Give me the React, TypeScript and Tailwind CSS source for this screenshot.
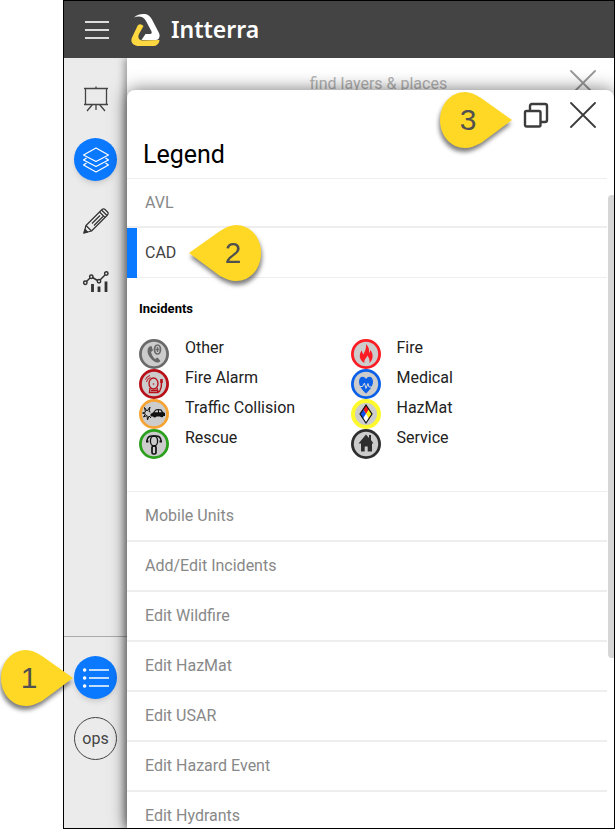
import React from 'react';

type CalloutProps = {
  label: string;
  className: string;
  flip?: boolean;
};

const Callout: React.FC<CalloutProps> = ({ label, className, flip }) => (
  <div className={`absolute z-20 h-14 w-[72px] pointer-events-none ${className}`}>
    <svg
      viewBox="0 0 72 56"
      className={`absolute inset-0 h-full w-full overflow-visible drop-shadow-[-1px_4px_2px_rgba(0,0,0,0.5)] ${flip ? 'rotate-y-180' : ''}`}
    >
      <path d="M72 28 L41 6 C35 2 30 0 25 0 C11 0 0 12 0 28 C0 44 11 56 25 56 C30 56 35 54 41 51 Z" fill="#fed824" />
    </svg>
    <span
      className={`absolute inset-y-0 flex w-14 items-center justify-center font-['Liberation_Sans',sans-serif] text-3xl text-[#505050] ${flip ? 'right-0' : 'left-0'}`}
    >
      {label}
    </span>
  </div>
);

const Logo = () => (
  <svg viewBox="0 0 30 32" className="h-8 w-[30px]">
    <path d="M3 3.500 C6 0.500 9 0 12 0 C17 0 19 2 21 5.500 L28 19 C29.500 22.500 28 26 25 26 H10.500 L14.500 20 H19 C21 20 21 18.500 20.300 17 L15 7 C12.500 2.500 8 1.500 3 3.500 Z" fill="#fff" />
    <path d="M8 10.500 Q10 9.500 12.500 12 L8 20 C6.500 23.500 7.500 26 11 26.500 L28.500 26 C28 30 25.500 32 22 32 H8 C2 32 -1 28 1 23.500 L6 13 C6.500 11.500 7 11 8 10.500 Z" fill="#fed840" />
  </svg>
);

const Board = () => (
  <svg viewBox="0 0 26 26" className="h-[26px] w-[26px]" fill="none" stroke="#444" strokeWidth="1.3">
    <path d="M1 2.5 H25 M2.5 2.5 V18 M23.5 2.5 V18 M1 18.5 H25 M13 0.5 V2.5 M13 18.5 V24 M9.5 18.5 L4 25 M16.5 18.5 L22 25" />
  </svg>
);

const Layers = () => (
  <svg viewBox="0 0 26 26" className="h-[26px] w-[26px]" fill="none" stroke="#fff" strokeWidth="1.2" strokeLinejoin="round">
    <path d="M13 1 L25.5 8 L13 14.5 L0.5 8 Z" />
    <path d="M3.5 11 L0.5 13 L13 19.5 L25.5 13 L22.5 11" />
    <path d="M3.5 16 L0.5 18 L13 25 L25.5 18 L22.5 16" />
  </svg>
);

const Pencil = () => (
  <svg viewBox="0 0 26 26" className="h-[26px] w-[26px]" fill="none" stroke="#333" strokeWidth="1.2" strokeLinejoin="round">
    <path d="M1 25 L3 17.5 L18.5 2 Q20.5 0 22 1.500 L24.5 4 Q26 5.500 24 7.500 L8.500 23 Z" />
    <path d="M3 17.5 L8.500 23 M16.500 4 L22 9.500 M18.500 2 L24 7.500 M11 17.500 L20 8.500 M9 15.500 L17 7.500" />
    <path d="M1 25 L2 21.5 L4.5 24 Z" fill="#333" />
  </svg>
);

const Chart = () => (
  <svg viewBox="0 0 26 22" className="h-[22px] w-[26px]" fill="none" stroke="#333" strokeWidth="1.5">
    <path d="M3.5 10.5 L7 7 M9.5 6.5 L14.5 9.5 M17 9 L22 4" />
    <circle cx="2.3" cy="11.7" r="1.7" />
    <circle cx="8.3" cy="5.7" r="1.7" />
    <circle cx="16" cy="10.3" r="1.7" />
    <circle cx="23.3" cy="2.5" r="1.7" />
    <path d="M9.5 13 V21 M16 15.5 V21 M23 10.5 V21" strokeWidth="2.8" />
  </svg>
);

const ListIcon = () => (
  <svg viewBox="0 0 26 20" className="h-5 w-[26px]" stroke="#fff" strokeWidth="1.5" fill="#fff">
    <path d="M6 2 H26 M6 10 H26 M6 18 H26" />
    <circle cx="1.7" cy="2" r="1" />
    <circle cx="1.7" cy="10" r="1" />
    <circle cx="1.7" cy="18" r="1" />
  </svg>
);

const Cross = ({ color }: { color: string }) => (
  <svg viewBox="0 0 26 26" className="h-[26px] w-[26px]" fill="none" stroke={color} strokeWidth="1.8" strokeLinecap="round">
    <path d="M1 1 L25 25 M25 1 L1 25" />
  </svg>
);

const Windows = () => (
  <svg viewBox="0 0 26 26" className="h-[26px] w-[26px]" fill="none" stroke="#3c3c3c" strokeWidth="2.4">
    <path d="M7 8 V4 Q7 2 9 2 H22 Q24 2 24 4 V18 Q24 20 22 20 H18" />
    <rect x="2" y="9" width="15.5" height="15.5" rx="1.5" />
  </svg>
);

const glyphs: Record<string, React.ReactNode> = {
  Other: (
    <g fill="#686868">
      <path d="M10.5 7.5 C7.500 10 8 15 11.500 19 C15 23.500 19 25 21.500 22 L18.5 18.500 L16 20 C14 18 12.5 15.5 12 13 L14 11.5 L12.5 7 Z" />
      <ellipse cx="18.500" cy="10.500" rx="3" ry="4.5" fill="none" stroke="#686868" strokeWidth="1.7" />
      <path d="M17.8 8 H19.2 V9.800 H20.5 V11.2 H19.2 V13 H17.8 V11.2 H16.500 V9.800 H17.8 Z" />
    </g>
  ),
  'Fire Alarm': (
    <g fill="none" stroke="#b81018" strokeWidth="1.4">
      <ellipse cx="14.5" cy="14.5" rx="4.500" ry="5.500" />
      <path d="M11 19 L10.5 23.500 H19 L18 19 M12 21.500 H18 M19 22.500 H20.500 Q23 18 22.500 13" />
      <path d="M22.5 10 V14" strokeWidth="2.6" />
      <path d="M7.500 13 Q8 9.500 11.500 8.500 M6.500 10.500 Q7.500 7.500 11 6.500" strokeWidth="1" />
      <circle cx="14.5" cy="15" r="0.8" fill="#b81018" stroke="none" />
    </g>
  ),
  'Traffic Collision': (
    <g fill="#111">
      <path d="M11.500 15 L14 13.5 L16.500 10.5 Q19 9.500 22.500 10.5 L24 13 L26 14 V17 H24.500 A2 2 0 0 1 21 17.500 H17.500 A2 2 0 0 1 14 17.500 H11.500 Z" />
      <path d="M17 11.5 L15.500 13.3 H19 V11.2 Z M20 11.2 V13.3 H22.700 L21.700 11.5 Z" fill="#ccc" />
      <path d="M11.500 13 L10 12.500 L11 8 L8 12 L5.500 8.500 L6.500 13 L3.500 14 L6.500 15 L4.500 18 L8 16.500 L8.500 21 L10 17 L12 19" fill="none" stroke="#111" />
    </g>
  ),
  Rescue: (
    <g fill="none" stroke="#111" strokeWidth="1.8">
      <path d="M8 13 V11.500 Q8.500 7 13 7 H17 Q21.500 7 22 11.500 V13" strokeWidth="1.5" />
      <ellipse cx="15" cy="12" rx="3.600" ry="5" strokeWidth="1.300" />
      <rect x="13" y="17" width="4" height="8" rx="1.500" strokeWidth="1.7" />
      <path d="M7 12.500 H9.500 M20.500 12.500 H23" />
    </g>
  ),
  Fire: (
    <path
      d="M15 5 C18 8 18.500 11 18 14.500 L19.500 11 C22.500 15.500 22.500 20 18.500 24 C19 20.500 17.800 18.500 16.300 16.500 C15.800 19 13 20 13.300 24 C8 20.500 7.800 16.500 10.500 11.500 L12.300 15.500 C14 12 15.700 9 15 5 Z"
      fill="#fb1c24"
    />
  ),
  Medical: (
    <g>
      <path d="M15 24.5 C11 21 8 17 8 12.5 C8 7.500 12.5 6 15 10 C17.5 6 22 7.500 22 12.5 C22 17 19 21 15 24.5 Z" fill="#0c60e8" />
      <path d="M9 17.5 H11.500 L13.500 14 L15 19.5 L17 14.5 L18 18 H21" fill="none" stroke="#ddd" />
    </g>
  ),
  HazMat: (
    <g>
      <path d="M15 5.500 L18 10.25 L15 15 L12 10.25 Z" fill="#f01414" />
      <path d="M12 10.25 L15 15 L12 19.75 L9 15 Z" fill="#0c50e8" />
      <path d="M18 10.25 L21 15 L18 19.75 L15 15 Z" fill="#ffee10" />
      <path d="M15 15 L18 19.75 L15 24.5 L12 19.75 Z" fill="#fff" />
      <path d="M15 6 L21 15 L15 24 L9 15 Z" fill="none" stroke="#111" strokeWidth="1.2" />
    </g>
  ),
  Service: <path d="M15 5.500 L18 9 V6 H20 V11 L22.500 14.500 H21 V22.500 H16.700 V17.500 H13.700 V22.500 H10 V14.500 H7.500 Z" fill="#2e2e2e" />,
};

const incidents = [
  { name: 'Other', ring: '#6a6a6a' },
  { name: 'Fire', ring: '#fb1c24' },
  { name: 'Fire Alarm', ring: '#b81018' },
  { name: 'Medical', ring: '#0c60e8' },
  { name: 'Traffic Collision', ring: '#f5a333' },
  { name: 'HazMat', ring: '#fdf92c', ringWidth: 4 },
  { name: 'Rescue', ring: '#2ba01c' },
  { name: 'Service', ring: '#2e2e2e' },
];

const layers = ['Mobile Units', 'Add/Edit Incidents', 'Edit Wildfire', 'Edit HazMat', 'Edit USAR', 'Edit Hazard Event', 'Edit Hydrants'];

const Header = () => (
  <header className="flex h-[57px] shrink-0 items-center bg-[#444] pl-[21px]">
    <button aria-label="Menu" className="flex w-6 flex-col gap-[6px]">
      <span className="h-[2px] bg-[#ddd]" />
      <span className="h-[2px] bg-[#ddd]" />
      <span className="h-[2px] bg-[#ddd]" />
    </button>
    <div className="ml-[22px] flex items-center gap-[10px]">
      <Logo />
      <span className="pb-[2px] font-['Noto_Sans',sans-serif] text-[23px] leading-8 font-semibold text-white">Intterra</span>
    </div>
  </header>
);

const Sidebar = () => (
  <nav className="flex w-[63px] shrink-0 flex-col bg-[#ebebeb]">
    <div className="flex flex-1 flex-col items-center gap-[18px] pt-[19px]">
      <button aria-label="Board" className="flex size-[43px] items-center justify-center"><Board /></button>
      <button aria-label="Layers" className="flex size-[43px] items-center justify-center rounded-full bg-[#0a78ff] shadow-md"><Layers /></button>
      <button aria-label="Draw" className="flex size-[43px] items-center justify-center"><Pencil /></button>
      <button aria-label="Charts" className="flex size-[43px] items-center justify-center"><Chart /></button>
    </div>
    <div className="flex flex-col items-center gap-[18px] border-t border-[#aaa] pt-[19px] pb-[68px]">
      <div className="relative">
        <button aria-label="Legend" className="flex size-[43px] items-center justify-center rounded-full bg-[#0a78ff] shadow-md"><ListIcon /></button>
        <Callout label="1" className="-top-[6px] right-[44px]" />
      </div>
      <button className="size-[43px] rounded-full border border-[#444] text-base text-[#444]">ops</button>
    </div>
  </nav>
);

const LegendPanel = () => (
  <section className="relative flex min-h-0 flex-1 flex-col rounded-t-lg bg-white shadow-[0_0_18px_rgba(0,0,0,0.55)]">
    <div className="relative flex justify-end gap-[21px] pt-3 pr-[18px]">
      <button aria-label="Open in window"><Windows /></button>
      <button aria-label="Close legend"><Cross color="#3c3c3c" /></button>
      <Callout label="3" className="top-[2px] right-[102px]" />
    </div>
    <h1 className="mt-3 pb-2 pl-4 text-[25px] leading-[30px] text-black">Legend</h1>
    <div className="min-h-0 flex-1 overflow-hidden pr-[7px]">
      <button className="block h-[50px] w-full border-t border-b-2 border-[#eee] pl-[18px] text-left text-[#888]">AVL</button>
      <div className="relative">
        <button className="flex h-[50px] w-full items-stretch text-left text-[#444]">
          <span className="w-[10px] bg-[#0a78ff]" />
          <span className="flex flex-1 items-center border-b border-[#eee] pl-2">CAD</span>
        </button>
        <Callout label="2" className="-top-[3px] left-[62px]" flip />
      </div>
      <div className="h-[213px] pt-[21px] pr-[45px] pl-3">
        <h2 className="text-[13px] leading-5 font-bold text-black">Incidents</h2>
        <ul className="mt-5 grid grid-cols-2">
          {incidents.map((item) => (
            <li key={item.name} className="flex h-[30px] gap-4">
              <svg viewBox="0 0 30 30" className="size-[30px] shrink-0">
                <circle cx="15" cy="15" r={15 - (item.ringWidth ?? 2.8) / 2} fill="#ccc" stroke={item.ring} strokeWidth={item.ringWidth ?? 2.8} />
                {glyphs[item.name]}
              </svg>
              <span className="leading-[18px] text-[#222]">{item.name}</span>
            </li>
          ))}
        </ul>
      </div>
      <div className="border-t border-[#eee]">
        {layers.map((name) => (
          <button key={name} className="block h-[50px] w-full border-b-2 border-[#eee] pl-[18px] text-left text-[#888]">
            {name}
          </button>
        ))}
      </div>
    </div>
    <div className="absolute top-[105px] right-0 h-[463px] w-[6px] rounded-l-sm bg-[#d6d6d6]" />
  </section>
);

const App: React.FC = () => {
  return (
    <div className="h-screen bg-white pl-[63px] font-[Roboto,sans-serif] text-base">
      <div className="flex h-full flex-col border border-black">
        <Header />
        <div className="flex min-h-0 flex-1">
          <Sidebar />
          <main className="flex min-w-0 flex-1 flex-col bg-white shadow-[-2px_0_8px_rgba(0,0,0,0.4)] [clip-path:inset(0_0_0_-400px)]">
            <div className="flex h-8 shrink-0 items-start pt-3 pr-[18px]">
              <input
                aria-label="find layers & places"
                placeholder="find layers & places"
                className="min-w-0 flex-1 pl-[60px] text-center leading-7 outline-none placeholder:text-[#b4b4b4]"
              />
              <button aria-label="Clear search"><Cross color="#999" /></button>
            </div>
            <LegendPanel />
          </main>
        </div>
      </div>
    </div>
  );
};

export default App;
